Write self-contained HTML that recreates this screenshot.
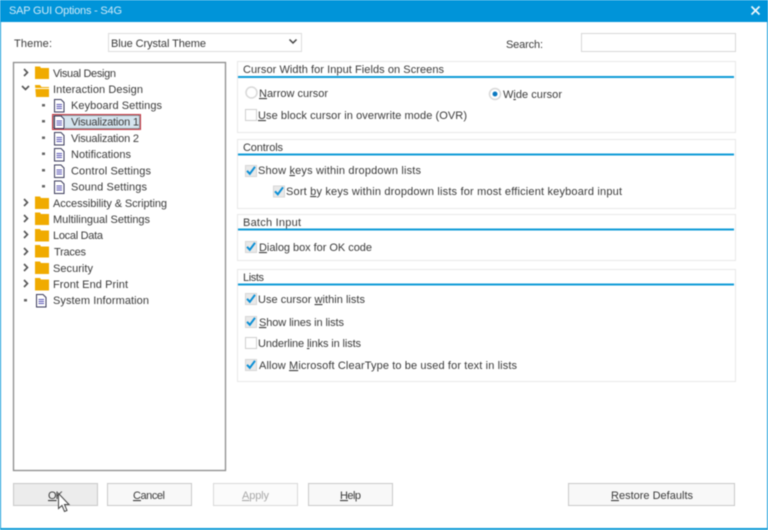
<!DOCTYPE html>
<html><head><meta charset="utf-8"><title>SAP GUI Options - S4G</title>
<style>
html,body{margin:0;padding:0;background:#fff;width:768px;height:530px;overflow:hidden}
svg{display:block;filter:blur(.4px)}
text{font-family:"Liberation Sans",sans-serif;font-size:11px;fill:#3a3a3a}
.u{text-decoration:underline}
</style></head><body>
<svg width="768" height="530" viewBox="0 0 768 530" xmlns="http://www.w3.org/2000/svg">
<defs>
<g id="folder"><path d="M0 1h5l1 1.500H14v11H0z" fill="#f0ab00"/></g>
<g id="doc"><path d="M.5 1.500h6.500l3 3v9.500H.5z" fill="#fff" stroke="#3a3a5a"/><path d="M2.500 6.500h5.500M2.500 8.500h5.500M2.500 10.500h5.500" stroke="#5a55b5"/></g>
<path id="ch" d="M0 0l3.500 3.500L0 7" fill="none" stroke="#555" stroke-width="1.600"/>
<g id="cb"><rect x=".5" y=".5" width="11" height="11" fill="#e9e9e9" stroke="#d6d6d6"/><path d="M2 5.800l2.800 3L10 1.800" fill="none" stroke="#0a8fd6" stroke-width="2"/></g>
<g id="cbo"><rect x=".5" y=".5" width="11" height="11" fill="#fff" stroke="#cfcfcf"/></g>
</defs>
<rect width="768" height="530" fill="#0f9bd7"/>
<rect x="1" y="22" width="766" height="506" fill="#fff"/>
<rect width="768" height="22" fill="#0094d9"/>
<text x="9" y="14" textLength="113" style="fill:#cfeaf8">SAP GUI Options - S4G</text>
<path d="M751.500 6.500l8 8M759.500 6.500l-8 8" stroke="#eef8fd" stroke-width="1.700"/>

<text x="14" y="47" textLength="38">Theme:</text>
<rect x="108.500" y="33.500" width="193" height="18" fill="#fff" stroke="#dcdcdc"/>
<text x="111" y="47" textLength="95">Blue Crystal Theme</text>
<path d="M289.500 39.500l3.500 3.500 3.500-3.500" fill="none" stroke="#444" stroke-width="1.500"/>
<text x="506" y="48" textLength="37">Search:</text>
<rect x="581.500" y="33.500" width="154" height="18" fill="#fff" stroke="#d8d8d8"/>

<rect x="13.500" y="62.500" width="212" height="408" fill="#fff" stroke="#8c8c8c" stroke-width="1.300"/>
<use href="#ch" x="24" y="69"/><use href="#folder" x="35" y="65.500"/><text x="53" y="77" textLength="63">Visual Design</text>
<path d="M22 86l3.500 3.500L29 86" fill="none" stroke="#555" stroke-width="1.600"/>
<path d="M35 85h5l1.500 2H49v10H36z" fill="#f0ab00"/><path d="M35 88h14v1H35z" fill="#fff"/>
<text x="53" y="93" textLength="90">Interaction Design</text>

<rect x="52.500" y="114.500" width="88" height="15" fill="#d5e5ef" stroke="#c9343f"/>
<rect x="53.500" y="115.500" width="86" height="13" fill="none" stroke="#444" stroke-dasharray="1 1"/>
<g fill="#666"><rect x="42" y="104" width="3" height="2.500"/><rect x="42" y="120" width="3" height="2.500"/><rect x="42" y="136.500" width="3" height="2.500"/><rect x="42" y="152.500" width="3" height="2.500"/><rect x="42" y="169" width="3" height="2.500"/><rect x="42" y="185" width="3" height="2.500"/><rect x="24" y="299" width="3" height="2.500"/></g>
<use href="#doc" x="54" y="98"/><text x="71" y="109" textLength="91">Keyboard Settings</text>
<use href="#doc" x="54" y="114.500"/><text x="71" y="125.500" textLength="68">Visualization 1</text>
<use href="#doc" x="54" y="131"/><text x="71" y="142" textLength="68">Visualization 2</text>
<use href="#doc" x="54" y="147"/><text x="71" y="158" textLength="60">Notifications</text>
<use href="#doc" x="54" y="163.500"/><text x="71" y="174.500" textLength="80">Control Settings</text>
<use href="#doc" x="54" y="179.500"/><text x="71" y="190.500" textLength="76">Sound Settings</text>

<use href="#ch" x="24" y="199"/><use href="#folder" x="35" y="195.500"/><text x="53" y="207" textLength="114">Accessibility &amp; Scripting</text>
<use href="#ch" x="24" y="215"/><use href="#folder" x="35" y="211.500"/><text x="53" y="223" textLength="97">Multilingual Settings</text>
<use href="#ch" x="24" y="231"/><use href="#folder" x="35" y="228"/><text x="53" y="239" textLength="50">Local Data</text>
<use href="#ch" x="24" y="248"/><use href="#folder" x="35" y="244"/><text x="54" y="255.500" textLength="32">Traces</text>
<use href="#ch" x="24" y="264"/><use href="#folder" x="35" y="260.500"/><text x="53" y="272" textLength="40">Security</text>
<use href="#ch" x="24" y="280"/><use href="#folder" x="35" y="277"/><text x="53" y="288" textLength="75">Front End Print</text>
<use href="#doc" x="36" y="293"/><text x="53" y="304" textLength="96">System Information</text>

<g fill="#fff" stroke="#e8e8e8">
<rect x="237.500" y="61.500" width="498" height="71"/>
<rect x="237.500" y="139.500" width="498" height="69"/>
<rect x="237.500" y="214.500" width="498" height="46"/>
<rect x="237.500" y="269.500" width="498" height="112"/>
</g>
<g fill="#0f9bd7"><rect x="238" y="76" width="496" height="2"/><rect x="238" y="153.500" width="496" height="2"/><rect x="238" y="228.500" width="496" height="2"/><rect x="238" y="283.500" width="496" height="2"/></g>
<text x="243" y="73" textLength="201">Cursor Width for Input Fields on Screens</text>
<text x="243" y="151" textLength="40">Controls</text>
<text x="243" y="226" textLength="58">Batch Input</text>
<text x="243" y="281" textLength="21">Lists</text>

<circle cx="251.500" cy="92.500" r="5.500" fill="#fff" stroke="#d8d8d8" stroke-width="1.500"/>
<text x="259" y="97" textLength="69"><tspan class="u">N</tspan>arrow cursor</text>
<circle cx="495" cy="94" r="5.500" fill="#fff" stroke="#d8d8d8" stroke-width="1.500"/><circle cx="495" cy="94" r="2.500" fill="#0a78c0"/>
<text x="503" y="98" textLength="59">W<tspan class="u">i</tspan>de cursor</text>
<use href="#cbo" x="245" y="109"/>
<text x="258" y="119" textLength="209"><tspan class="u">U</tspan>se block cursor in overwrite mode (OVR)</text>

<use href="#cb" x="245" y="165"/>
<text x="258" y="174" textLength="163">Show <tspan class="u">k</tspan>eys within dropdown lists</text>
<use href="#cb" x="273" y="185.500"/>
<text x="286" y="195" textLength="336">Sort <tspan class="u">b</tspan>y keys within dropdown lists for most efficient keyboard input</text>

<use href="#cb" x="245" y="241"/>
<text x="259" y="251" textLength="113"><tspan class="u">D</tspan>ialog box for OK code</text>

<use href="#cb" x="245" y="293"/>
<text x="258" y="303" textLength="107">Use cursor <tspan class="u">w</tspan>ithin lists</text>
<use href="#cb" x="245" y="316"/>
<text x="259" y="326" textLength="85"><tspan class="u">S</tspan>how lines in lists</text>
<use href="#cbo" x="245" y="337"/>
<text x="258" y="347" textLength="103">Underline <tspan class="u">l</tspan>inks in lists</text>
<use href="#cb" x="245" y="359"/>
<text x="259" y="369" textLength="258">Allow <tspan class="u">M</tspan>icrosoft ClearType to be used for text in lists</text>

<g stroke="#c8c8c8">
<rect x="13.500" y="483.500" width="84" height="22" fill="#ececec"/>
<rect x="107.500" y="483.500" width="84" height="22" fill="#f8f8f8"/>
<rect x="213.500" y="483.500" width="84" height="22" fill="#fbfbfb" stroke="#d8d8d8"/>
<rect x="308.500" y="483.500" width="84" height="22" fill="#f8f8f8"/>
<rect x="568.500" y="483.500" width="166" height="22" fill="#f8f8f8"/>
</g>
<text x="48" y="499" textLength="15"><tspan class="u">O</tspan>K</text>
<text x="133" y="499" textLength="32"><tspan class="u">C</tspan>ancel</text>
<text x="242" y="499" textLength="27" style="fill:#a8a8a8"><tspan class="u">A</tspan>pply</text>
<text x="340" y="499" textLength="21"><tspan class="u">H</tspan>elp</text>
<text x="611" y="499" textLength="82"><tspan class="u">R</tspan>estore Defaults</text>
<path d="M58.500 493.500v15l3.500-3 2.500 6 2.500-1-2.500-6h4.500z" fill="#fff" stroke="#444" stroke-width="1"/>
</svg>
</body></html>
